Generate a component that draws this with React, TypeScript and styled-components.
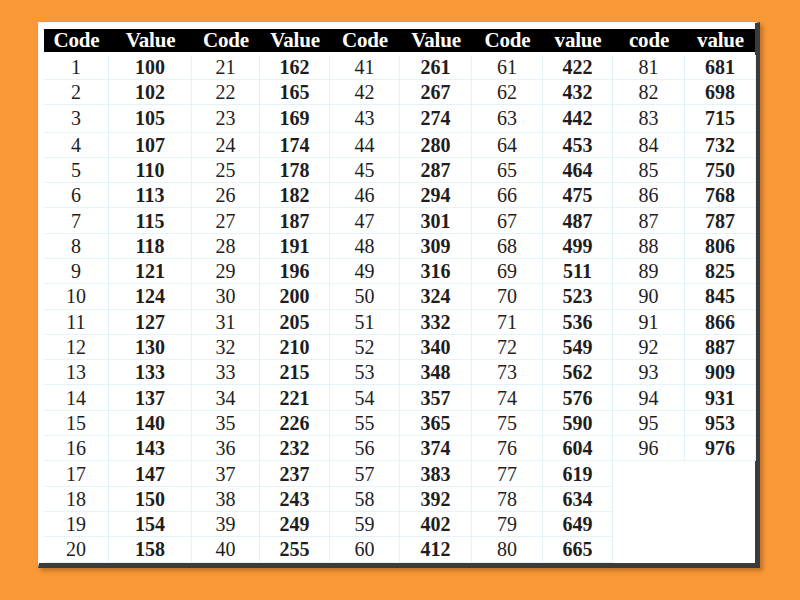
import React from "react";
import styled, { createGlobalStyle } from "styled-components";

const Global = createGlobalStyle`
  html, body { margin: 0; padding: 0; background: #f99837; }
  body { font-family: "Liberation Serif", "Times New Roman", serif; }
`;

const COLS = "65px 83px 68px 70px 70px 72px 71px 70px 72px 71px";
const ROWS = "25px 25px 27.5px repeat(17, 25.3px)";

const Page = styled.div`
  width: 800px;
  height: 600px;
  padding: 22px 0 0 38px;
  box-sizing: border-box;
  background: #f99837;
`;

const Card = styled.div`
  width: 722px;
  box-sizing: border-box;
  background: #fff;
  padding: 6px 0 0 5px;
  border-top: 1px solid #eef8fa;
  border-left: 1px solid #eef8fa;
  border-right: 5px solid #3b3b3b;
  border-bottom: 5px solid #3b3b3b;
  box-shadow: 3px 3px 4px rgba(90, 50, 10, 0.35);
`;

const HeaderBar = styled.div`
  display: grid;
  grid-template-columns: ${COLS};
  height: 23px;
  background: #000;
  align-items: center;
`;

const HeadCell = styled.div`
  color: #fff;
  font-weight: bold;
  font-size: 21px;
  text-align: center;
  line-height: 23px;
  letter-spacing: -0.2px;
`;

const Body = styled.div`
  display: grid;
  grid-template-columns: ${COLS};
  grid-template-rows: ${ROWS};
  margin-top: 3px;
`;

const Cell = styled.div<{ $bold?: boolean; $empty?: boolean }>`
  display: flex;
  align-items: center;
  justify-content: center;
  font-size: 20px;
  font-weight: ${(p) => (p.$bold ? "bold" : "normal")};
  color: #1e1e1e;
  border-right: 1px solid ${(p) => (p.$empty ? "transparent" : "#e2f4f7")};
  border-bottom: 1px solid ${(p) => (p.$empty ? "transparent" : "#e2f4f7")};
  box-sizing: border-box;
  padding-top: 1px;
`;

const values: number[][] = [
  [100, 102, 105, 107, 110, 113, 115, 118, 121, 124, 127, 130, 133, 137, 140, 143, 147, 150, 154, 158],
  [162, 165, 169, 174, 178, 182, 187, 191, 196, 200, 205, 210, 215, 221, 226, 232, 237, 243, 249, 255],
  [261, 267, 274, 280, 287, 294, 301, 309, 316, 324, 332, 340, 348, 357, 365, 374, 383, 392, 402, 412],
  [422, 432, 442, 453, 464, 475, 487, 499, 511, 523, 536, 549, 562, 576, 590, 604, 619, 634, 649, 665],
  [681, 698, 715, 732, 750, 768, 787, 806, 825, 845, 866, 887, 909, 931, 953, 976],
];

const headers = ["Code", "Value", "Code", "Value", "Code", "Value", "Code", "value", "code", "value"];

export default function App() {
  const cells: React.ReactNode[] = [];
  for (let r = 0; r < 20; r++) {
    for (let g = 0; g < 5; g++) {
      const v = values[g][r];
      const empty = v === undefined;
      cells.push(
        <Cell key={`c${r}-${g}`} $empty={empty}>
          {empty ? "" : g * 20 + r + 1}
        </Cell>
      );
      cells.push(
        <Cell key={`v${r}-${g}`} $bold $empty={empty}>
          {empty ? "" : v}
        </Cell>
      );
    }
  }
  return (
    <>
      <Global />
      <Page>
        <Card>
          <HeaderBar>
            {headers.map((h, i) => (
              <HeadCell key={i}>{h}</HeadCell>
            ))}
          </HeaderBar>
          <Body>{cells}</Body>
        </Card>
      </Page>
    </>
  );
}
